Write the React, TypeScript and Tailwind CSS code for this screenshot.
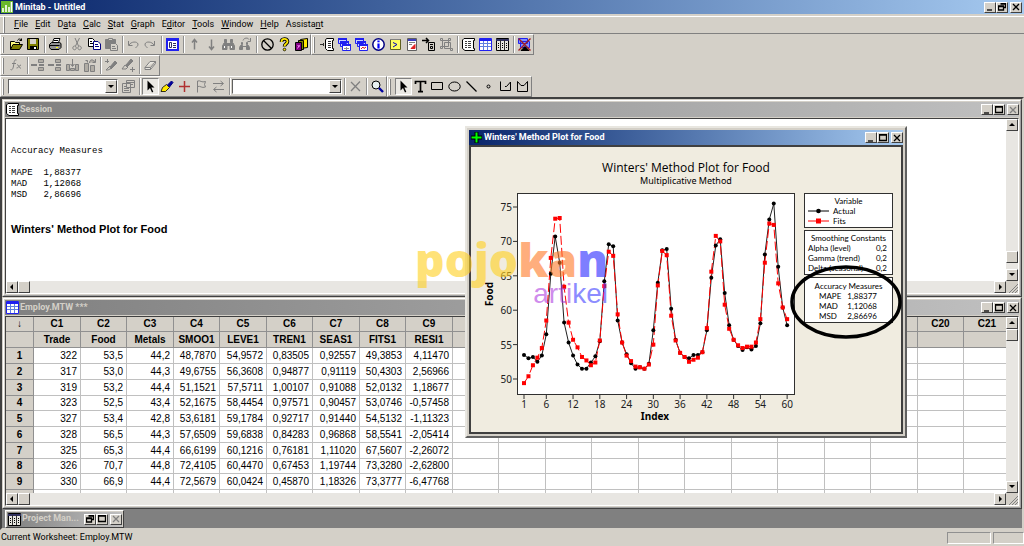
import type { ReactNode } from 'react';
import clsx from 'clsx';

const RAISED =
  'bg-[#d4d0c8] border border-t-white border-l-white border-b-[#404040] border-r-[#404040]';

/* ---------- icons ---------- */

function Icon({ children }: { children: ReactNode }) {
  return (
    <svg
      viewBox="0 0 15 15"
      className="h-[15px] w-[15px] shrink-0"
      fill="none"
      stroke="#000"
      aria-hidden="true"
    >
      {children}
    </svg>
  );
}

const G = '#808080';

const icons: Record<string, ReactNode> = {
  open: (
    <>
      <path d="M1.5 12.5v-8h4l1 1h4v2" fill="#ffff80" />
      <path d="M1.5 12.5l2.5-5h9.500l-3 5z" fill="#808000" />
      <path d="M8.5 3.500c1-2 3-2 4 0m0-2v2h-2" />
    </>
  ),
  save: (
    <>
      <path d="M1.5 1.5h11v11h-11z" fill="#808000" />
      <path d="M4 2h6v5H4z" fill="#d4d0c8" stroke="none" />
      <path d="M4 9h7v4H4z" fill="#000" stroke="none" />
      <path d="M8 10h2v2H8z" fill="#fff" stroke="none" />
    </>
  ),
  print: (
    <>
      <path d="M4.5 5.5l1.500-4h6l-1.500 4" fill="#fff" />
      <path d="M1.5 7.5l2-2h8l1.500 1v4l-2 2h-8l-1.500-2z" fill="#909090" />
      <path d="M2 8.5h9.500M3 12.5h8M6 3.5h4" />
      <path d="M8 10.5h2" stroke="#ffff00" />
    </>
  ),
  cut: (
    <path
      d="M5 1l3.500 8M9.500 1L5.500 9M4.500 9a1.700 1.900 0 1 0 .1 0M9.500 9a1.700 1.900 0 1 0 .1 0"
      stroke={G}
    />
  ),
  copy: (
    <>
      <path d="M1.5 1.5h4l2 2v6h-6z" fill="#fff" />
      <path d="M3 4.5h2M3 6.5h3" />
      <path d="M6.5 4.5h4.500l2.500 2.500v5.500h-7z" fill="#fff" stroke="#000080" />
      <path d="M8 7.5h3M8 9.5h4" stroke="#000080" />
    </>
  ),
  paste: (
    <>
      <path d="M1.5 2.5h10v9h-10z" fill={G} stroke={G} />
      <path d="M4.5 1.5h4v2h-4z" fill="#d4d0c8" stroke={G} />
      <path d="M6.5 6.5h5l2 2v5h-7z" fill="#d4d0c8" stroke={G} />
      <path d="M8 9.5h3M8 11.5h4" stroke={G} />
    </>
  ),
  undo: <path d="M2.5 4v4.500h4M3 8C5 4.500 11 4 12 7c0 2-1 3-2.500 3.500" stroke={G} />,
  redo: <path d="M11.5 4v4.500h-4M11 8C9 4.500 3 4 2 7c0 2 1 3 2.500 3.500" stroke={G} />,
  dialog: (
    <>
      <path d="M2 2h11v11H2z" fill="#fff" stroke="#2020f0" strokeWidth="2" />
      <path d="M2 3.5h11" stroke="#2020f0" />
      <path d="M4.5 5.5h2v5h-2zM8 6.5h3M8 8.5h3M8 10.5h3" stroke="#303060" />
    </>
  ),
  up: <path d="M7.5 12.500V3M5 5.500l2.500-3 2.500 3" stroke={G} strokeWidth="1.500" />,
  down: <path d="M7.5 2.500V12M5 9.500l2.500 3 2.500-3" stroke={G} strokeWidth="1.500" />,
  find: (
    <>
      <path d="M3.5 2.5h2v3h-2zM9.5 2.5h2v3h-2zM3 6h3v6.500H1.500V9zM9 6h3l1.500 3v3.500H9z" fill={G} stroke={G} />
      <path d="M6 6h3v3H6z" fill={G} stroke="none" />
      <path d="M3.5 9v2M10.5 9v2" stroke="#fff" />
    </>
  ),
  findNext: (
    <>
      <path d="M3.5 5.5h1v2h-1zM8.5 5.5h1v2h-1zM2.5 8.5h2v4h-3v-2zM8.5 8.5h2l1 2v2h-3zM5 9.5h3" fill={G} stroke={G} />
      <path d="M5 3.500c1-3 5-3 6-1M12.5 1v3.500h-3" stroke={G} />
    </>
  ),
  cancel: (
    <>
      <circle cx="7.5" cy="7.5" r="5.700" strokeWidth="1.300" />
      <path d="M3.500 3.500l8 8" strokeWidth="1.300" />
    </>
  ),
  help: (
    <>
      <path d="M4.500 5c0-4 6-4 6-.5C10.500 7 7.500 6.500 7.500 9.500" strokeWidth="3.600" />
      <path d="M4.500 5c0-4 6-4 6-.5C10.500 7 7.500 6.500 7.500 9.300" stroke="#ffe800" strokeWidth="1.800" />
      <circle cx="7.500" cy="12.500" r="1.300" fill="#ffe800" strokeWidth=".8" />
    </>
  ),
  guide: (
    <>
      <path d="M6.5 2.500l7-1v9l-7 1z" fill="#ffe800" />
      <path d="M4.5 3.5h5v9h-5z" fill="#808000" />
      <path d="M1.5 5.5h6v8h-6z" fill="#800080" />
      <path d="M3.500 8l2 2M5.500 8l-2 3.500" stroke="#ff80ff" />
    </>
  ),
  sessionTo: (
    <>
      <path d="M6.500 1.5h7v2h-1v8h1v2h-6l-2-2V3z" fill="#fff" />
      <path d="M0 7.5h4M3.5 6v3M8 4.5h3M8 6.5h3M8 8.5h3M8 10.5h3" stroke="#303030" />
    </>
  ),
  sheets: (
    <>
      <path d="M1.5 1.5h8v5h-8zM3.5 4.5h8v5h-8z" fill="#c8d0ff" stroke="#2020f0" />
      <path d="M5.5 7.5h8v6h-8z" fill="#fff" stroke="#2020f0" />
      <path d="M1 2h9M3 5h9M5 8h9" stroke="#2020f0" strokeWidth="2" />
      <path d="M7 11.5h5M9.5 10v3" stroke="#909090" />
    </>
  ),
  graphs: (
    <>
      <path d="M1.5 1.5h8v5h-8zM3.5 4.5h8v5h-8z" fill="#c8d0ff" stroke="#2020f0" />
      <path d="M5.5 7.5h8v6h-8z" fill="#fff" stroke="#2020f0" />
      <path d="M1 2h9M3 5h9M5 8h9" stroke="#2020f0" strokeWidth="2" />
      <path d="M7 12l2-2 1 1.500 2-1.500" stroke="#d02020" />
    </>
  ),
  info: (
    <>
      <circle cx="7.500" cy="7.500" r="5.700" fill="#fff" stroke="#000080" strokeWidth="1.500" />
      <path d="M7.500 3.500v1.800M7.500 6.500v5" stroke="#0000ff" strokeWidth="2.200" />
    </>
  ),
  history: (
    <>
      <path d="M2.5 2.5h10v10h-10z" fill="#ffff60" stroke="#606020" />
      <path d="M2 2.5h10" stroke="#808080" />
      <path d="M5 5.500l4 2-4 2.500" stroke="#0000c0" />
    </>
  ),
  report: (
    <>
      <path d="M2.5 1.5h9v12h-9z" fill="#fff" stroke="#606060" />
      <path d="M3 3h8" stroke="#4040c0" strokeWidth="2" />
      <path d="M4 5.5h6M4 7.5h3" stroke={G} />
      <path d="M6 11.500l4-4v4z" fill="#e02020" stroke="#e02020" />
    </>
  ),
  docTo: (
    <>
      <path d="M0 3.500h6M4 1l2.500 2.500L4 6" strokeWidth="1.500" />
      <path d="M6.5 5.5h6v8h-6z" fill="#d4d0c8" />
      <path d="M8 7.5h3M8.5 9.5h2v2h-2z" />
    </>
  ),
  group: (
    <path
      d="M3.5 3.5h6v6h-6zM5.5 5.5h6v6h-6zM1.5 1.5h2v2h-2zM9.5 1.5h2v2h-2zM1.5 9.5h2v2h-2zM11.5 11.5h2v2h-2z"
      stroke={G}
    />
  ),
  session: (
    <>
      <path d="M3 1.5h10.500v2h-1v8h1v2H4l-2.500-2V3z" fill="#fff" />
      <path d="M4 4.5h2m1 0h3M4 6.5h2m1 0h3M4 8.5h2m1 0h3M4 10.5h2m1 0h3" stroke="#404040" />
    </>
  ),
  worksheet: (
    <>
      <path d="M1.5 1.5h12v12h-12z" fill="#fff" stroke="#2020f0" />
      <path d="M1 3h13" stroke="#2020f0" strokeWidth="2" />
      <path d="M2 6.5h11M2 9.5h11M5.5 4v9M9.5 4v9" stroke="#6080e0" />
    </>
  ),
  project: (
    <>
      <path d="M1.5 1.5h12v12h-12z" fill="#e8e6e0" />
      <path d="M1 3h13" stroke="#303060" strokeWidth="2" />
      <path d="M5.5 3v10M9.5 3v10" stroke="#303030" />
      <path d="M3 6.5h1M3 8.5h1M3 10.5h1M7 6.5h1M7 8.5h1M7 10.5h1M11 6.5h1M11 8.5h1M11 10.5h1" />
    </>
  ),
  closeGraphs: (
    <>
      <path d="M1.5 1.5h9v5h-9zM3.5 4.5h9v6h-9z" fill="#8090ff" stroke="#2020f0" />
      <path d="M4 13.500l4-4 4 4z" fill="#000" />
      <path d="M1.500 1.500l12 12M13.500 1.500l-12 12" stroke="#a02020" strokeWidth="1.400" />
    </>
  ),
  fx: (
    <path
      d="M7.500 2C5 1 5 5 4.500 8S3 12.500 1.500 11.500M3 5.500h4M8 7c2-1 2 4 4 3M12 7c-2 0-2.500 3.500-4.500 3"
      stroke={G}
    />
  ),
  insCell: (
    <>
      <path d="M7.5 1.5h5v3h-5zM7.5 9.5h5v3h-5z" fill="#b0aca4" stroke={G} />
      <path d="M0 7h6" stroke={G} strokeWidth="2" />
      <path d="M8 7h5" stroke={G} strokeWidth="2" />
    </>
  ),
  insCol: (
    <path d="M7.5 1v7M5.500 6l2 2.500 2-2.500M1.5 6.5h3v6h-3zM10.5 6.5h3v6h-3zM5.5 10.5h4v2h-4z" fill="#b0aca4" stroke={G} />
  ),
  moveCol: (
    <path d="M2.5 5.5h4v8h-4zM8.5 7.5h4v6h-4zM3.5 2.5h2v2M7.500 5c0-4 4-4 5-1M13.5 1v3.500h-3" fill="#b0aca4" stroke={G} />
  ),
  brush: (
    <>
      <path d="M6 9l5-6 2 2-6 6z" fill={G} stroke={G} />
      <path d="M1 3.5h4M3.5 1v4M2 12l4-4 2 2-4 2z" stroke={G} />
    </>
  ),
  brushPlus: (
    <>
      <path d="M5 7l5-6 2 2-6 6z" fill={G} stroke={G} />
      <path d="M1 11l3-4 3 2-2 2zM9 11.5h5M11.5 9v5" stroke={G} />
    </>
  ),
  eraser: <path d="M2 9.500l5-6h5.500v2l-5 6H2zM2 9.500h5.500l5-6M7.500 9.500v2" fill="#e8e6e0" stroke={G} />,
  properties: (
    <>
      <path d="M5.5 1.5h8v7h-8zM1.5 4.5h8v9h-8z" fill="#d4d0c8" stroke={G} />
      <path d="M6 3.5h7M3 7.5h2M3 9.5h5M3 11.5h5M10 5.5h2" stroke={G} />
    </>
  ),
  pointer: <path d="M4.500 1.500v10l2.500-2.500 2 4.500 1.300-.7-2-4.300h3.200z" fill="#000" stroke="none" />,
  paint: (
    <>
      <path d="M1 12.500l1.500-4 4-3 3 3-4 4z" fill="#ffe800" strokeWidth=".8" />
      <path d="M7.500 6l4-4L13 3.500 9.500 8z" fill="#0000a0" stroke="#000080" />
    </>
  ),
  cross: <path d="M7.500 2v11M2 7.500h11" stroke="#b03030" strokeWidth="1.500" />,
  flag: <path d="M3.5 13.500V2c3-1 4 2 8 .5l-1 3 1 2.500c-4 1.500-5-1.500-8-.5" stroke={G} />,
  swap: <path d="M2 4.500h10M9.500 2l3 2.500-3 2.500M13 10.500H3M5.500 8l-3 2.500 3 2.500" stroke={G} />,
  delete: <path d="M3 3l9 9M12 2.500l-9 9.500" stroke={G} strokeWidth="1.300" />,
  zoom: (
    <>
      <circle cx="6" cy="6" r="4" fill="#e8f0f0" />
      <path d="M9 9l4 4" stroke="#0000a0" strokeWidth="2.400" />
    </>
  ),
  text: <path d="M2.500 5V2.500h10V5M7.500 2v11M5 12.700h5" strokeWidth="1.700" />,
  rect: <path d="M1.5 3.5h11v7h-11z" />,
  ellipse: <ellipse cx="7.500" cy="7.500" rx="5.700" ry="4.500" />,
  line: <path d="M2.500 2.500l10 10" strokeWidth="1.200" />,
  dot: <circle cx="7.500" cy="7.500" r="1.500" />,
  polyline: <path d="M2.5 2.500v9h10V3l-4 4.500H7" />,
  polygon: <path d="M2.5 2.500v10h10v-10L9 6.500H6z" />,
};

/* ---------- toolbars ---------- */

function ToolButton({ name, pressed }: { name: string; pressed?: boolean }) {
  return (
    <button
      type="button"
      aria-label={name}
      aria-pressed={pressed}
      className={clsx(
        'flex h-[17px] w-[17px] items-center justify-center',
        pressed &&
          'border border-t-[#808080] border-l-[#808080] border-b-white border-r-white bg-[#ebe9e4]',
      )}
    >
      <Icon>{icons[name]}</Icon>
    </button>
  );
}

function Separator() {
  return (
    <span
      className="mx-[2px] h-[17px] w-px shrink-0 bg-[#909090] shadow-[1px_0_0_#fff]"
      aria-hidden="true"
    />
  );
}

function Toolbar({ label, children }: { label: string; children: ReactNode }) {
  return (
    <div
      role="toolbar"
      aria-label={label}
      className="flex h-[21px] items-center border border-t-white border-l-white border-b-[#808080] border-r-[#808080]"
    >
      <span className="mr-1 ml-px h-4 w-[2px] border-r border-[#808080] bg-white" aria-hidden="true" />
      {children}
    </div>
  );
}

function Tools({ names }: { names: string[] }) {
  return (
    <>
      {names.map((name, i) =>
        name === '|' ? <Separator key={i} /> : <ToolButton key={i} name={name} />,
      )}
    </>
  );
}

function Combo({ label }: { label: string }) {
  return (
    <span className="flex h-[15px] w-[110px] border border-t-[#606060] border-l-[#606060] border-b-white border-r-white bg-white">
      <select aria-label={label} className="min-w-0 flex-1 appearance-none bg-white text-[9px]">
        <option value="" />
      </select>
      <span className={clsx(RAISED, 'flex w-3 items-center justify-center')}>
        <svg viewBox="0 0 6 3" className="w-1.5" aria-hidden="true">
          <path d="M0 0h6L3 3z" />
        </svg>
      </span>
    </span>
  );
}

/* ---------- window chrome ---------- */

const captionPaths: Record<string, string> = {
  Minimize: 'M1 7h5',
  Maximize: 'M.5 1h7M.5.5h7v6h-7z',
  Restore: 'M2.500 1h5M2.500.5h5v4H6M.5 3.500h5M.5 3h5v4h-5z',
  Close: 'M1 1l6 6M7 1L1 7',
};

function Captions({ names, disabledClose }: { names: string[]; disabledClose?: boolean }) {
  return (
    <span className="flex">
      {names.map((name) => (
        <button
          key={name}
          type="button"
          aria-label={name}
          className={clsx(
            RAISED,
            'flex h-[11px] w-3 items-center justify-center',
            name === 'Close' && 'ml-[2px]',
          )}
        >
          <svg
            viewBox="0 0 8 8"
            className="h-2 w-2"
            fill="none"
            stroke={name === 'Close' && disabledClose ? G : '#000'}
            strokeWidth="1.300"
            aria-hidden="true"
          >
            <path d={captionPaths[name]} />
          </svg>
        </button>
      ))}
    </span>
  );
}

const arrowPaths: Record<string, string> = {
  up: 'M0 4h6L3 1z',
  down: 'M0 1h6L3 4z',
  left: 'M4 0v6L1 3z',
  right: 'M2 0v6l3-3z',
};

function ScrollArrow({ dir }: { dir: string }) {
  return (
    <button
      type="button"
      aria-label={`Scroll ${dir}`}
      className={clsx(RAISED, 'flex h-3 w-3 shrink-0 items-center justify-center')}
    >
      <svg viewBox="0 0 6 6" className="h-1.5 w-1.5" aria-hidden="true">
        <path d={arrowPaths[dir]} />
      </svg>
    </button>
  );
}

function Thumb() {
  return <span className={clsx(RAISED, 'h-3 w-3 shrink-0')} />;
}

function ScrollPane({ thumbAtEnd, children }: { thumbAtEnd?: boolean; children: ReactNode }) {
  return (
    <div className="flex min-h-0 flex-1 flex-col border border-t-[#404040] border-l-[#404040] border-b-white border-r-white">
      <div className="flex min-h-0 flex-1">
        <div className="min-w-0 flex-1 overflow-hidden bg-white">{children}</div>
        <div className="flex w-3 flex-col bg-[#e8e6e2]">
          <ScrollArrow dir="up" />
          {!thumbAtEnd && <Thumb />}
          <span className="flex-1" />
          {thumbAtEnd && (
            <span className="mb-1.5">
              <span className={clsx(RAISED, 'block h-3 w-3')} />
            </span>
          )}
          <ScrollArrow dir="down" />
        </div>
      </div>
      <div className="flex h-3 bg-[#e8e6e2]">
        <ScrollArrow dir="left" />
        <Thumb />
        <span className="flex-1" />
        <ScrollArrow dir="right" />
        <span className="flex w-3 items-end justify-end bg-[#d4d0c8]">
          <svg viewBox="0 0 10 10" className="h-2.5 w-2.5" stroke={G} aria-hidden="true">
            <path d="M1 10l9-9M4 10l6-6M7 10l3-3" />
          </svg>
        </span>
      </div>
    </div>
  );
}

function ChildWindow({
  title,
  icon,
  disabledClose,
  className,
  children,
}: {
  title: string;
  icon: string;
  disabledClose?: boolean;
  className?: string;
  children: ReactNode;
}) {
  return (
    <section
      className={clsx(
        'flex flex-col border border-t-[#d4d0c8] border-l-[#d4d0c8] border-b-[#404040] border-r-[#404040] bg-[#d4d0c8]',
        className,
      )}
    >
      <div className="flex min-h-0 flex-1 flex-col border border-t-white border-l-white border-b-[#a0a0a0] border-r-[#a0a0a0] p-px">
        <header className="flex h-[15px] items-center bg-linear-to-r from-[#808080] to-[#c0c0c0]">
          <Icon>{icons[icon]}</Icon>
          <h2 className="flex-1 text-[9px] leading-[15px] font-bold text-[#d4d0c8]">{title}</h2>
          <Captions names={['Minimize', 'Maximize', 'Close']} disabledClose={disabledClose} />
        </header>
        <div className="mt-px flex min-h-0 flex-1 flex-col">{children}</div>
      </div>
    </section>
  );
}

/* ---------- worksheet ---------- */

const columnNames = ['Trade', 'Food', 'Metals', 'SMOO1', 'LEVE1', 'TREN1', 'SEAS1', 'FITS1', 'RESI1'];

const rows = [
  ['322', '53,5', '44,2', '48,7870', '54,9572', '0,83505', '0,92557', '49,3853', '4,11470'],
  ['317', '53,0', '44,3', '49,6755', '56,3608', '0,94877', '0,91119', '50,4303', '2,56966'],
  ['319', '53,2', '44,4', '51,1521', '57,5711', '1,00107', '0,91088', '52,0132', '1,18677'],
  ['323', '52,5', '43,4', '52,1675', '58,4454', '0,97571', '0,90457', '53,0746', '-0,57458'],
  ['327', '53,4', '42,8', '53,6181', '59,1784', '0,92717', '0,91440', '54,5132', '-1,11323'],
  ['328', '56,5', '44,3', '57,6509', '59,6838', '0,84283', '0,96868', '58,5541', '-2,05414'],
  ['325', '65,3', '44,4', '66,6199', '60,1216', '0,76181', '1,11020', '67,5607', '-2,26072'],
  ['326', '70,7', '44,8', '72,4105', '60,4470', '0,67453', '1,19744', '73,3280', '-2,62800'],
  ['330', '66,9', '44,4', '72,5679', '60,0424', '0,45870', '1,18326', '73,3777', '-6,47768'],
];

const columns = Array.from({ length: 21 }, (_, i) => i);

function Worksheet() {
  const head = 'border-r border-b border-[#909090] bg-[#d4d0c8] p-0 font-bold';
  return (
    <table className="w-[1003px] table-fixed border-separate border-spacing-0 font-['Liberation_Sans',Arial,sans-serif] text-[10px] leading-[14px]">
      <colgroup>
        <col className="w-[28px]" />
        {columns.map((c) => (
          <col key={c} className={c % 2 ? 'w-[46px]' : 'w-[47px]'} />
        ))}
      </colgroup>
      <thead>
        <tr className="h-[15px]">
          <th className={head}>↓</th>
          {columns.map((c) => (
            <th key={c} scope="col" className={head}>{`C${c + 1}`}</th>
          ))}
        </tr>
        <tr className="h-4">
          <th className={head} />
          {columns.map((c) => (
            <th key={c} className={head}>
              {columnNames[c]}
            </th>
          ))}
        </tr>
      </thead>
      <tbody className="[&>tr:nth-child(4n)]:h-[15px]">
        {rows.map((row, r) => (
          <tr key={r} className="h-4">
            <th scope="row" className={head}>
              {r + 1}
            </th>
            {columns.map((c) => (
              <td key={c} className="border-r border-b border-[#c0c0c0] p-0 pr-[3px] text-right whitespace-nowrap">
                {row[c]}
              </td>
            ))}
          </tr>
        ))}
        <tr className="h-[3px] leading-[2px]">
          <th className="border-r border-[#909090] bg-[#d4d0c8] p-0" />
          {columns.map((c) => (
            <td key={c} className="border-r border-[#c0c0c0] p-0" />
          ))}
        </tr>
      </tbody>
    </table>
  );
}

/* ---------- plot ---------- */

const actual = [
  53.5, 53.0, 53.2, 52.5, 53.4, 56.5, 65.3, 70.7, 66.9, 58.2, 55.3, 53.4, 52.1, 51.5, 51.5, 52.4,
  53.3, 55.5, 64.2, 69.6, 69.3, 58.5, 55.3, 53.6, 52.3, 51.5, 51.7, 51.5, 52.2, 57.1, 64.0, 68.7,
  68.9, 60.2, 55.7, 53.8, 53.2, 53.0, 53.5, 53.5, 53.9, 57.1, 64.7, 69.4, 70.3, 62.5, 57.8, 55.7,
  54.8, 54.2, 54.6, 54.3, 54.8, 58.1, 68.1, 73.2, 75.5, 66.3, 60.4, 57.8,
];

const fits = [
  49.4, 50.4, 52.0, 53.1, 54.5, 58.5, 67.6, 73.3, 73.4, 63.4, 58.2, 55.7, 54.6, 53.2, 52.7, 52.0,
  52.4, 55.6, 63.5, 68.5, 67.9, 59.4, 55.3, 53.4, 52.6, 51.8, 51.7, 51.5, 52.1, 55.0, 63.6, 68.6,
  68.0, 59.2, 55.6, 53.8, 53.2, 52.5, 52.8, 53.1, 53.9, 57.4, 65.6, 70.8, 70.0, 60.8, 57.3, 55.7,
  54.9, 54.5, 54.7, 54.7, 55.3, 58.7, 66.9, 72.6, 72.4, 63.9, 60.4, 58.7,
];

const xAt = (index: number) => 53 + (index - 1) * 4.46;
const yAt = (value: number) => 20 + (75 - value) * 6.88;
const toPoints = (series: number[]) =>
  series.map((v, i) => `${xAt(i + 1).toFixed(1)},${yAt(v).toFixed(1)}`).join(' ');

function Plot() {
  return (
    <svg
      viewBox="0 0 326 245"
      className="h-[245px] w-[326px] shrink-0 font-['Noto_Sans',sans-serif] text-[10px]"
      role="img"
      aria-label="Time series of Food with fitted values"
    >
      <rect x="46.5" y="6.5" width="277" height="201" fill="#fff" stroke="#303030" />
      {[50, 55, 60, 65, 70, 75].map((v) => (
        <g key={v}>
          <path d={`M42 ${yAt(v)}h4`} stroke="#303030" />
          <text x="41" y={yAt(v) + 4} textAnchor="end" fill="#202020">
            {v}
          </text>
        </g>
      ))}
      {[1, 6, 12, 18, 24, 30, 36, 42, 48, 54, 60].map((n) => (
        <g key={n}>
          <path d={`M${xAt(n)} 208v4`} stroke="#303030" />
          <text x={xAt(n)} y="221" textAnchor="middle" fill="#202020">
            {n}
          </text>
        </g>
      ))}
      <text x="184" y="233" textAnchor="middle" className="font-bold">
        Index
      </text>
      <text transform="translate(22 107) rotate(-90)" textAnchor="middle" className="font-bold">
        Food
      </text>
      <polyline points={toPoints(actual)} fill="none" stroke="#202020" />
      <polyline points={toPoints(fits)} fill="none" stroke="#f00" strokeDasharray="9 3" />
      {actual.map((v, i) => (
        <circle key={i} cx={xAt(i + 1)} cy={yAt(v)} r="2" />
      ))}
      {fits.map((v, i) => (
        <rect key={i} x={xAt(i + 1) - 2} y={yAt(v) - 2} width="4" height="4" fill="#f00" />
      ))}
    </svg>
  );
}

const constants = [
  ['Alpha (level)', '0,2'],
  ['Gamma (trend)', '0,2'],
  ['Delta (seasonal)', '0,2'],
];

const measures = [
  ['MAPE', '1,88377'],
  ['MAD', '1,12068'],
  ['MSD', '2,86696'],
];

function Legend() {
  const box = 'border border-[#303030] bg-white px-[3px]';
  return (
    <div className="mt-1.5 flex w-[89px] shrink-0 flex-col font-['Lato',sans-serif] text-[8px] leading-[10px]">
      <div className={clsx(box, 'h-[35px] pt-[2px]')}>
        <p className="text-center">Variable</p>
        <p className="flex items-center gap-1">
          <svg viewBox="0 0 21 6" className="h-1.5 w-[21px]" aria-hidden="true">
            <path d="M0 3h21" stroke="#000" />
            <circle cx="10.5" cy="3" r="2.3" />
          </svg>
          Actual
        </p>
        <p className="flex items-center gap-1">
          <svg viewBox="0 0 21 6" className="h-1.5 w-[21px]" aria-hidden="true">
            <path d="M0 3h21" stroke="#f00" />
            <path d="M8 .5h5v5H8z" fill="#f00" />
          </svg>
          Fits
        </p>
      </div>
      <div className={clsx(box, 'mt-[2px] h-[45px] pt-[2px]')}>
        <p className="text-center">Smoothing Constants</p>
        {constants.map(([name, value]) => (
          <p key={name} className="flex justify-between pr-[2px]">
            <span>{name}</span>
            <span>{value}</span>
          </p>
        ))}
      </div>
      <div className={clsx(box, 'relative mt-[2px] h-[46px] pt-[3px]')}>
        <p className="text-center">Accuracy Measures</p>
        {measures.map(([name, value]) => (
          <p key={name} className="flex justify-between pr-3 pl-[11px]">
            <span>{name}</span>
            <span>{value}</span>
          </p>
        ))}
        <svg
          viewBox="0 0 114 76"
          className="absolute -top-[14px] -left-4 h-[76px] w-[114px] max-w-none"
          aria-hidden="true"
        >
          <ellipse cx="57" cy="38" rx="54" ry="35" fill="none" stroke="#000" strokeWidth="3.5" />
        </svg>
      </div>
    </div>
  );
}

function PlotWindow() {
  return (
    <section className="absolute top-[27px] left-[463px] border-2 border-t-[#e8e6e0] border-l-[#e8e6e0] border-b-[#606060] border-r-[#606060] bg-[#d4d0c8] p-[2px]">
      <header className="flex h-[15px] items-center bg-linear-to-r from-[#0a246a] to-[#a6caf0]">
        <Icon>
          <path d="M7.5 2v11M2 7.500h11" stroke="#000" strokeWidth="4" />
          <path d="M7.5 2.500v10M2.500 7.500h10" stroke="#00ff00" strokeWidth="2" />
        </Icon>
        <h2 className="flex-1 text-[9px] leading-[15px] font-bold text-white">
          Winters' Method Plot for Food
        </h2>
        <Captions names={['Minimize', 'Maximize', 'Close']} />
      </header>
      <div className="border-2 border-[#404040] bg-[#f0ece0] pt-[14px] pr-2">
        <h3 className="pl-2 text-center font-['Open_Sans',sans-serif] text-xs leading-[14px] font-medium">
          Winters' Method Plot for Food
        </h3>
        <p className="pl-2 text-center font-['Noto_Sans',sans-serif] text-[9px] leading-3">
          Multiplicative Method
        </p>
        <div className="flex gap-[7px]">
          <Plot />
          <Legend />
        </div>
      </div>
    </section>
  );
}

/* ---------- application ---------- */

// label and the position of its access key
const menus: [string, number][] = [
  ['File', 0],
  ['Edit', 0],
  ['Data', 1],
  ['Calc', 0],
  ['Stat', 0],
  ['Graph', 0],
  ['Editor', 1],
  ['Tools', 0],
  ['Window', 0],
  ['Help', 0],
  ['Assistant', 7],
];

export default function App() {
  return (
    <div className="relative flex h-screen flex-col overflow-hidden bg-[#d4d0c8] font-[Roboto,sans-serif] text-[9px] text-black">
      <header className="flex h-[14px] shrink-0 items-center bg-linear-to-r from-[#0a246a] to-[#a6caf0] pr-[2px] pl-px">
        <svg viewBox="0 0 12 12" className="h-3 w-3" aria-hidden="true">
          <rect width="12" height="12" fill="#6ab82c" />
          <path d="M2 11V7M5 11V4M8 11V6M10.500 11V1" stroke="#fff" strokeWidth="1.600" />
        </svg>
        <h1 className="flex-1 pl-[2px] text-[9px] leading-[14px] font-bold text-white">Minitab - Untitled</h1>
        <Captions names={['Minimize', 'Restore', 'Close']} />
      </header>

      <nav className="mt-[2px] flex h-[18px] shrink-0 items-center gap-[7px] border-t border-b border-t-white border-b-[#808080]">
        <span className="mr-[2px] ml-[3px] h-4 w-[2px] border-r border-[#808080] bg-white" />
        {menus.map(([label, key]) => (
          <button key={label} type="button">
            {label.slice(0, key)}
            <u>{label[key]}</u>
            {label.slice(key + 1)}
          </button>
        ))}
      </nav>

      <div className="flex shrink-0">
        <Toolbar label="Standard">
          <Tools
            names={[
              'open', 'save', '|', 'print', '|', 'cut', 'copy', 'paste', '|', 'undo', 'redo', '|',
              'dialog', '|', 'up', 'down', 'find', 'findNext', '|', 'cancel', 'help', 'guide',
            ]}
          />
        </Toolbar>
        <Toolbar label="Project Manager">
          <Tools
            names={[
              'sessionTo', 'sheets', 'graphs', 'info', 'history', 'report', 'docTo', 'group', '|',
              'session', 'worksheet', 'project', '|', 'closeGraphs',
            ]}
          />
        </Toolbar>
      </div>
      <div className="flex shrink-0">
        <Toolbar label="Worksheet">
          <Tools
            names={[
              'fx', '|', 'insCell', 'insCell', 'insCol', 'moveCol', '|', 'brush', 'brushPlus', '|', 'eraser',
            ]}
          />
        </Toolbar>
      </div>
      <div className="flex shrink-0">
        <Toolbar label="Graph editing">
          <Combo label="Graph item" />
          <span className="w-[2px]" />
          <Tools names={['properties', '|']} />
          <ToolButton name="pointer" pressed />
          <Tools names={['paint', 'cross', 'flag', 'swap', '|']} />
          <Combo label="Session item" />
          <Tools names={['|', 'delete', '|', 'zoom']} />
        </Toolbar>
        <Toolbar label="Annotation">
          <ToolButton name="pointer" pressed />
          <Tools names={['text', 'rect', 'ellipse', 'line', 'dot', 'polyline', 'polygon']} />
        </Toolbar>
      </div>

      <main className="relative flex min-h-0 flex-1 flex-col border-2 border-t-[#404040] border-l-[#404040] border-b-[#d4d0c8] border-r-[#d4d0c8] bg-[#808080]">
        <ChildWindow title="Session" icon="session" disabledClose className="min-h-0 flex-1">
          <ScrollPane thumbAtEnd>
            <div className="px-[5px] pt-[27px]">
              <pre className="font-['Liberation_Mono','Courier_New',monospace] text-[9px] leading-[11px]">
                {`Accuracy Measures\n\n${measures.map(([n, v]) => `${n.padEnd(6)}${v}`).join('\n')}`}
              </pre>
              <p className="mt-[22px] font-['Liberation_Sans',Arial,sans-serif] text-[11px] leading-[13px] font-bold">
                Winters' Method Plot for Food
              </p>
            </div>
          </ScrollPane>
        </ChildWindow>
        <ChildWindow title="Employ.MTW ***" icon="worksheet" className="shrink-0">
          <ScrollPane>
            <Worksheet />
          </ScrollPane>
        </ChildWindow>
        <div className="flex h-[19px] shrink-0 items-end px-[3px]">
          <div className={clsx(RAISED, 'flex h-[18px] w-[119px] items-center p-px')}>
            <div className="flex h-[15px] min-w-0 flex-1 items-center bg-linear-to-r from-[#808080] to-[#c0c0c0]">
              <Icon>{icons.project}</Icon>
              <span className="flex-1 font-bold whitespace-nowrap text-[#d4d0c8]">Project Man...</span>
              <Captions names={['Restore', 'Maximize', 'Close']} disabledClose />
            </div>
          </div>
        </div>
        <PlotWindow />
      </main>

      <footer className="flex h-4 shrink-0 items-center gap-[2px] pl-px">
        <span className="flex-1">Current Worksheet: Employ.MTW</span>
        <span className="h-3 w-11 border border-t-[#909090] border-l-[#909090] border-b-white border-r-white" />
        <span className="h-3 w-[31px] border border-t-[#909090] border-l-[#909090] border-b-white border-r-white" />
      </footer>

      <div className="pointer-events-none absolute top-[230px] left-[412px] w-[196px] text-right">
        <p className="font-['Open_Sans',sans-serif] text-[46px] leading-[58px] font-extrabold opacity-60">
          <span className="text-[#ffd020]">pojo</span>
          <span className="text-[#ff7a28]">ka</span>
          <span className="text-[#2a2aff]">n</span>
        </p>
        <p className="-mt-2 font-['Liberation_Sans',Arial,sans-serif] text-[28px] leading-7 opacity-60">
          <span className="text-[#b040e0]">arti</span>
          <span className="text-[#4040ff]">kel</span>
        </p>
      </div>
    </div>
  );
}
